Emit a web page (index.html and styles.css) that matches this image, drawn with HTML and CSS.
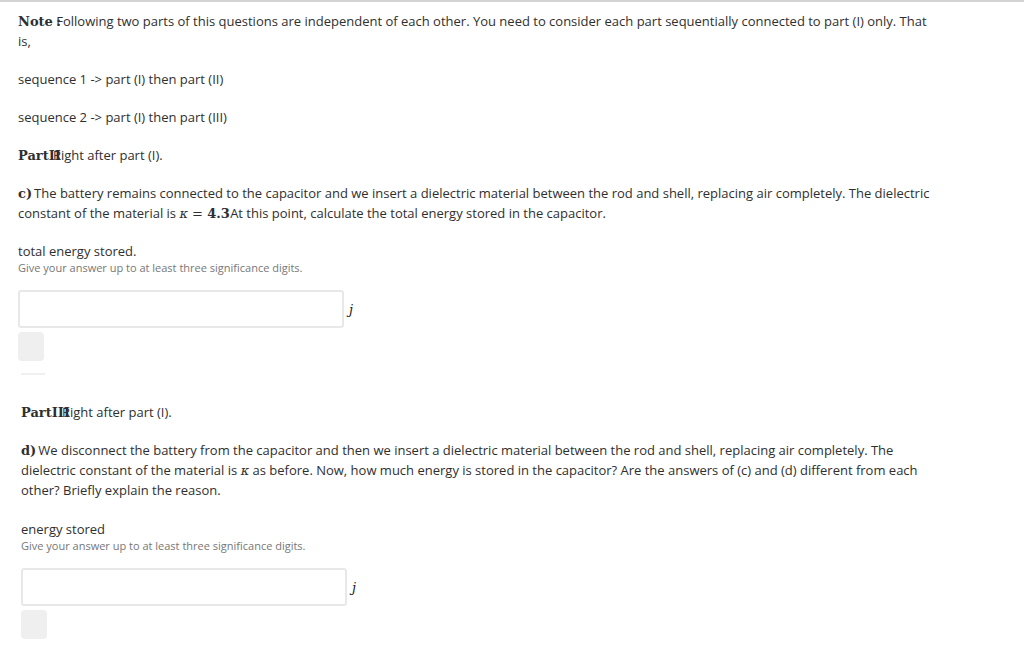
FILE: index.html
```html
<!DOCTYPE html>
<html>
<head>
<meta charset="utf-8">
<link rel="stylesheet" href="styles.css">
</head>
<body>
<div class="page">
  <section class="part first">
    <p class="para"><span class="mb">Note</span> <span class="mb ov">:</span><span class="olap">Following two parts of this questions are independent of each other. You need to consider each part sequentially connected to part (I) only. That is,</span></p>
    <p class="para">sequence 1 -&gt; part (I) then part (II)</p>
    <p class="para">sequence 2 -&gt; part (I) then part (III)</p>
    <p class="para"><span class="mb">PartII</span><span class="olap2">Right after part (I).</span></p>
    <p class="para"><span class="mb lbl">c)</span>The battery remains connected to the capacitor and we insert a dielectric material between the rod and shell, replacing air completely. The dielectric constant of the material is <span class="mi">κ</span><span class="mr"> = </span><span class="mr num">4.3</span> At this point, calculate the total energy stored in the capacitor.</p>
    <div class="answer">
      <div class="label">total energy stored.</div>
      <div class="hint">Give your answer up to at least three significance digits.</div>
      <div class="row">
        <div class="box"></div>
        <span class="unit">j</span>
      </div>
      <div class="btn"></div>
    </div>
    <div class="sep"></div>
  </section>
  <section class="part second">
    <p class="para"><span class="mb">PartIII</span><span class="olap3">Right after part (I).</span></p>
    <p class="para"><span class="mb lbl">d)</span>We disconnect the battery from the capacitor and then we insert a dielectric material between the rod and shell, replacing air completely. The dielectric constant of the material is <span class="mi">κ</span> as before. Now, how much energy is stored in the capacitor? Are the answers of (c) and (d) different from each other? Briefly explain the reason.</p>
    <div class="answer">
      <div class="label">energy stored</div>
      <div class="hint">Give your answer up to at least three significance digits.</div>
      <div class="row">
        <div class="box"></div>
        <span class="unit">j</span>
      </div>
      <div class="btn"></div>
    </div>
  </section>
</div>
</body>
</html>
```
FILE: styles.css
```css
html, body {
  margin: 0;
  padding: 0;
  background: #fff;
}
body {
  font-family: "Open Sans", "Noto Sans", sans-serif;
  font-size: 13px;
  color: #2f2f2f;
  border-top: 2px solid #d4d4d4;
}
.page {
  padding: 9px 0 0 0;
}
.part.first {
  padding-left: 18px;
  width: 912px;
}
.part.second {
  padding-left: 21px;
  width: 912px;
  margin-top: 27px;
}
.para {
  margin: 0 0 18px 0;
  line-height: 20px;
}
.mb {
  font-family: "DejaVu Serif", "Liberation Serif", serif;
  font-weight: bold;
  font-size: 13px;
  line-height: 1;
}
.lbl {
  margin-right: 2px;
}
.ov {
  display: inline-block;
  width: 0;
}
.olap2 { margin-left: -8px; }
.olap3 { margin-left: -8px; }
.mi {
  font-family: "DejaVu Serif", serif;
  font-style: italic;
  font-size: 13px;
  line-height: 1;
}
.mr {
  font-family: "DejaVu Serif", serif;
  font-size: 13px;
  line-height: 1;
}
.num {
  font-weight: bold;
  margin-right: -3px;
}
.answer {
  margin-top: 19px;
}
.second .answer {
  margin-top: 20px;
}
.label {
  line-height: 18px;
}
.hint {
  font-size: 11px;
  color: #777;
  line-height: 16px;
}
.row {
  display: flex;
  align-items: center;
  margin-top: 14px;
}
.box {
  box-sizing: border-box;
  width: 326px;
  height: 38px;
  border: 2px solid #e8e8e8;
  border-radius: 3px;
  background: #fff;
}
.unit {
  font-family: "DejaVu Serif", serif;
  font-style: italic;
  font-size: 13px;
  margin-left: 5px;
  color: #222;
}
.btn {
  width: 26px;
  height: 29px;
  margin-top: 4px;
  background: #efefef;
  border-radius: 4px;
}
.sep {
  width: 24px;
  height: 2px;
  background: #f0f0f0;
  margin: 12px 0 0 3px;
}
```
